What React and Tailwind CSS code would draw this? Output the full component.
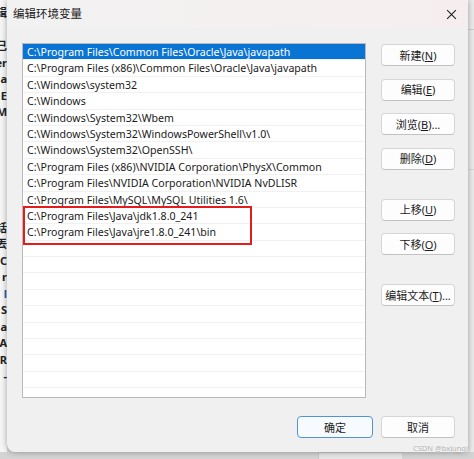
import React from 'react';

const paths = [
    'C:\\Program Files\\Common Files\\Oracle\\Java\\javapath',
    'C:\\Program Files (x86)\\Common Files\\Oracle\\Java\\javapath',
    'C:\\Windows\\system32',
    'C:\\Windows',
    'C:\\Windows\\System32\\Wbem',
    'C:\\Windows\\System32\\WindowsPowerShell\\v1.0\\',
    'C:\\Windows\\System32\\OpenSSH\\',
    'C:\\Program Files (x86)\\NVIDIA Corporation\\PhysX\\Common',
    'C:\\Program Files\\NVIDIA Corporation\\NVIDIA NvDLISR',
    'C:\\Program Files\\MySQL\\MySQL Utilities 1.6\\',
    'C:\\Program Files\\Java\\jdk1.8.0_241',
    'C:\\Program Files\\Java\\jre1.8.0_241\\bin',
];

const Btn = ({ label, hot, tail = '', primary = false, className = '' }) => (
    <button
        className={`h-[22px] rounded-[4px] border text-[11px] leading-none text-[#1b1b1b] ${
            primary ? 'border-[#4f94d4] bg-[#f7fbff]' : 'border-[#d6d6d6] border-b-[#c2c2c2] bg-[#fdfdfd]'
        } ${className}`}
    >
        {label}
        {hot && (
            <>
                (<span className="underline">{hot}</span>)
            </>
        )}
        {tail}
    </button>
);

// pieces of the window sitting behind the dialog
const behindLeft = ['辑', '', '己', 'er', 'a', 'E', 'M', '', '', '', '', '', '', '話', '丟', 'C', 'r', 'l', 'S', 'a', 'A', 'R', '-'];

export default function App() {
    const rows = [...paths, ...Array(10).fill('')];
    return (
        <div className="relative w-[474px] h-[459px] overflow-hidden bg-[#d4d4d4] flex flex-col font-['Noto_Sans','Noto_Sans_CJK_SC',sans-serif]">
            <div className="flex h-[452px]">
                <div className="w-[7px] bg-[#f6f6f6] overflow-hidden flex flex-col items-end pt-[5px] text-[11px] leading-[16.5px] text-[#222] font-bold">
                    {behindLeft.map((t, i) => (
                        <div key={i} className={`h-[16.5px] whitespace-nowrap ${t === 'l' ? 'text-[#2a5fa8]' : ''}`}>
                            {t || '\u00a0'}
                        </div>
                    ))}
                </div>

                <div className="w-[461px] bg-[#f0f0f0] rounded-bl-[8px] shadow-[0_0_6px_rgba(0,0,0,0.35)] flex flex-col z-10">
                    <div className="h-[28px] flex items-center justify-between pl-[6px] pr-[10px] bg-gradient-to-r from-[#f2f2f2] to-[#f6eeee]">
                        <span className="text-[11.5px] text-[#1a1a1a]">编辑环境变量</span>
                        <svg width="11" height="11" viewBox="0 0 10 10" className="mr-[1px]">
                            <path d="M1 1L9 9M9 1L1 9" stroke="#222" strokeWidth="1" />
                        </svg>
                    </div>

                    <div className="flex pl-[15px] pt-[15px] gap-[15px]">
                        <div className="w-[344px] h-[355px] border border-[#b9b9b9] bg-white overflow-hidden relative">
                            {rows.map((p, i) => (
                                <div
                                    key={i}
                                    className={`h-[16.4px] pl-[4px] text-[10.6px] leading-[16px] whitespace-nowrap border-b border-[#f1f1f1] ${
                                        i === 0 ? 'bg-[#0a74d4] text-white' : 'text-[#1a1a1a]'
                                    }`}
                                >
                                    {p}
                                </div>
                            ))}
                            <div className="absolute left-0 top-[162px] w-[229px] h-[39px] border-2 border-[#e51c1c]" />
                        </div>

                        <div className="w-[74px] flex flex-col pt-[1px]">
                            <div className="flex flex-col gap-[12.5px]">
                                <Btn label="新建" hot="N" />
                                <Btn label="编辑" hot="E" />
                                <Btn label="浏览" hot="B" tail="..." />
                                <Btn label="删除" hot="D" />
                            </div>
                            <div className="flex flex-col gap-[12.5px] mt-[29px]">
                                <Btn label="上移" hot="U" />
                                <Btn label="下移" hot="O" />
                            </div>
                            <Btn label="编辑文本" hot="T" tail="..." className="mt-[29px]" />
                        </div>
                    </div>

                    <div className="flex justify-end gap-[8px] pr-[13px] mt-[18px]">
                        <Btn label="确定" primary className="w-[76px]" />
                        <Btn label="取消" className="w-[74px]" />
                    </div>
                </div>

                <div className="w-[6px] bg-[#ececec] flex flex-col">
                    <div className="h-[30px] border-b border-[#cfcfcf]" />
                    <div className="h-[140px] border-b border-[#d8d8d8]" />
                </div>
            </div>

            <div className="flex h-[7px] pl-[318px]">
                <div className="w-[84px] h-full bg-[#e6e6e6] border-l border-t border-[#c8c8c8]" />
            </div>

            <div className="absolute left-[413px] top-[443px] whitespace-nowrap text-[7.5px] leading-[10px] text-[#b0b0b0] z-20 [text-shadow:0_0_2px_#fff]">
                CSDN @bxjungjl
            </div>
        </div>
    );
}
